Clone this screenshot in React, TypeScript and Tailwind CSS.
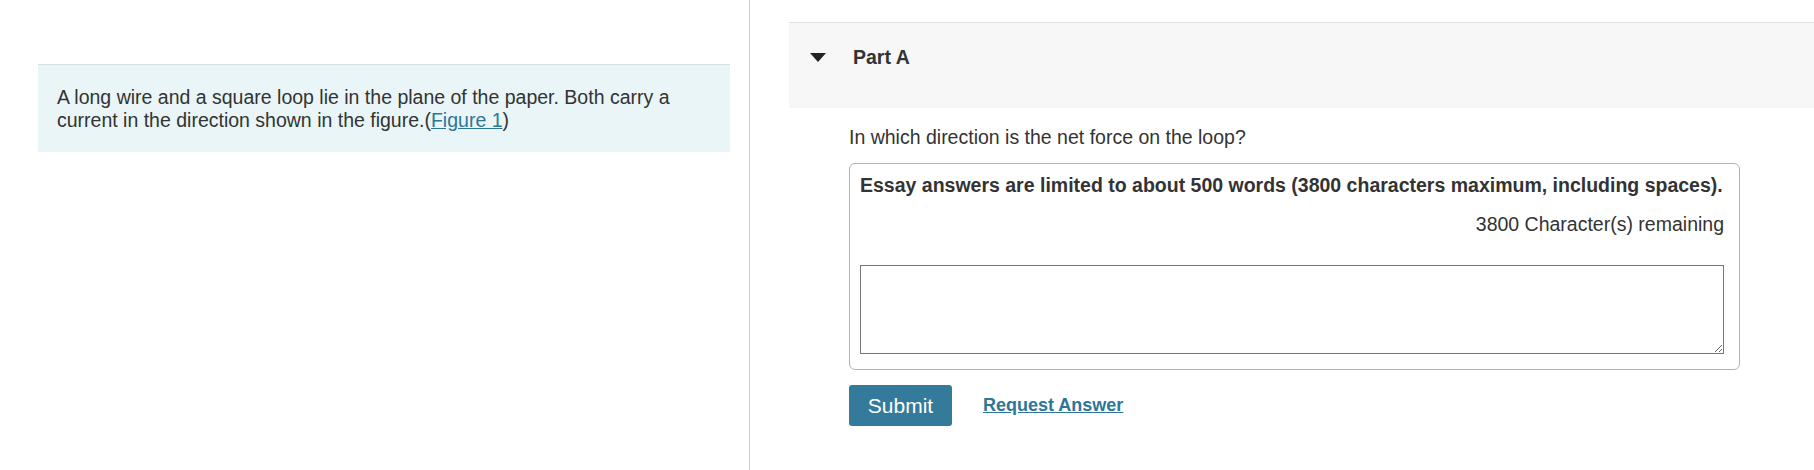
import React from 'react';

const App: React.FC = () => {
  return (
    <div className="flex w-full h-[470px] bg-white text-[#333] font-['Liberation_Sans',Arial,sans-serif] text-[19.5px] leading-[23px]">
      {/* Left: problem intro */}
      <div className="w-[749px] shrink-0 pt-[64px] pl-[38px]">
        <div className="w-[692px] border-t border-[#d9dee1] bg-[#e9f5f7] pt-[21px] pb-[20px] pl-[19px] pr-[19px]">
          <p>
            A long wire and a square loop lie in the plane of the paper. Both carry a current in the direction shown in the figure.(<a href="#" className="text-[#2e7697] underline">Figure 1</a>)
          </p>
        </div>
      </div>

      <div className="w-px shrink-0 bg-[#c9cdd6]" />

      {/* Right: part A */}
      <div className="flex-1 pt-[22px] pl-[39px]">
        <div className="h-[86px] border-t border-[#e2e2e2] bg-[#f7f7f7] pt-[23px] pl-[21px]">
          <div className="flex items-center gap-[27px]">
            <svg width="16" height="9" viewBox="0 0 16 9" className="shrink-0">
              <path d="M0 0H16L8 9Z" fill="#222" />
            </svg>
            <h2 className="font-bold">Part A</h2>
          </div>
        </div>

        <div className="pl-[60px] pr-[74px]">
          <p className="mt-[18px]">In which direction is the net force on the loop?</p>

          <div className="mt-[14px] rounded-[6px] border border-[#b3b3b3] pt-[10px] pl-[10px] pr-[15px] pb-[15px]">
            <p className="font-bold">
              Essay answers are limited to about 500 words (3800 characters maximum, including spaces).
            </p>
            <p className="mt-[16px] text-right">3800 Character(s) remaining</p>
            <textarea className="mt-[29px] block h-[89px] w-full border border-[#767676] bg-white" />
          </div>

          <div className="mt-[15px] flex items-center">
            <button
              type="button"
              className="h-[41px] w-[103px] rounded-[3px] bg-[#347a9a] text-[21px] text-white"
            >
              Submit
            </button>
            <a href="#" className="ml-[31px] text-[18px] font-bold text-[#2e7697] underline">
              Request Answer
            </a>
          </div>
        </div>
      </div>
    </div>
  );
};

export default App;
